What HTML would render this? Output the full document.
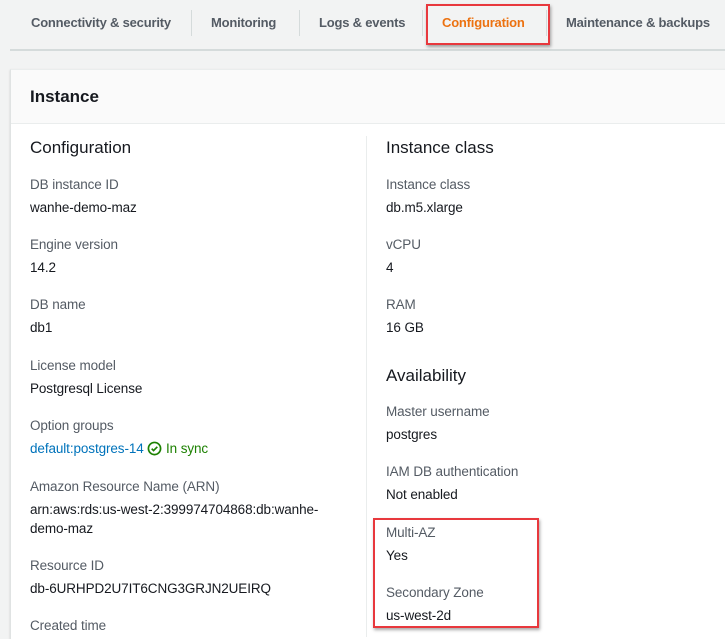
<!DOCTYPE html>
<html><head><meta charset="utf-8"><style>
*{margin:0;padding:0;box-sizing:border-box}
body{width:725px;height:637px;overflow:hidden;background:#f2f3f3;font-family:"Liberation Sans",sans-serif;position:relative;color:#16191f}
.a{position:absolute;white-space:nowrap}
.tab{top:15px;font-size:13px;letter-spacing:-0.2px;font-weight:bold;color:#545b64}
.sep{position:absolute;top:10px;width:1px;height:26px;background:#d5dbdb}
.lab{font-size:13.5px;color:#545b64;letter-spacing:-0.1px}
.val{font-size:13.5px;color:#16191f;letter-spacing:-0.1px}
.h{font-size:17px;color:#16191f}
.red{position:absolute;border:2px solid #e8383d;box-shadow:1px 2px 3px rgba(0,0,0,.35)}
</style></head><body>
<div class="a tab" style="left:31px">Connectivity &amp; security</div>
<div class="sep" style="left:191px"></div>
<div class="a tab" style="left:211px">Monitoring</div>
<div class="sep" style="left:299px"></div>
<div class="a tab" style="left:319px">Logs &amp; events</div>
<div class="sep" style="left:422px"></div>
<div class="a tab" style="left:442px;color:#ec7211">Configuration</div>
<div class="sep" style="left:546px"></div>
<div class="a tab" style="left:566px">Maintenance &amp; backups</div>
<div class="a" style="left:10px;top:49px;width:715px;height:2px;background:#d5dbdb"></div>
<div class="red" style="left:426px;top:4px;width:124px;height:41px"></div>

<div class="a" style="left:10px;top:69px;width:720px;height:570px;background:#fff;border-left:1px solid #e0e3e3;border-top:1px solid #eaeded;box-shadow:0 1px 2px rgba(0,0,0,.15)"></div>
<div class="a" style="left:11px;top:70px;width:714px;height:54px;background:#fafafa;border-bottom:1px solid #eaeded"></div>
<div class="a" style="left:30px;top:87px;font-size:17px;font-weight:bold">Instance</div>
<div class="a" style="left:366px;top:136px;width:1px;height:501px;background:#eaeded"></div>

<div class="a h" style="left:30px;top:138px">Configuration</div>
<div class="a lab" style="left:30px;top:177px">DB instance ID</div>
<div class="a val" style="left:30px;top:200px">wanhe-demo-maz</div>
<div class="a lab" style="left:30px;top:237px">Engine version</div>
<div class="a val" style="left:30px;top:260px">14.2</div>
<div class="a lab" style="left:30px;top:297px">DB name</div>
<div class="a val" style="left:30px;top:320px">db1</div>
<div class="a lab" style="left:30px;top:358px">License model</div>
<div class="a val" style="left:30px;top:381px">Postgresql License</div>
<div class="a lab" style="left:30px;top:418px">Option groups</div>
<div class="a val" style="left:30px;top:441px"><span style="color:#0073bb">default:postgres-14</span> <svg width="15" height="15" viewBox="0 0 16 16" style="vertical-align:-3px"><circle cx="8" cy="8" r="6.5" fill="none" stroke="#1d8102" stroke-width="1.8"/><path d="M5 8.2l2 2 4-4" fill="none" stroke="#1d8102" stroke-width="1.8"/></svg> <span style="color:#1d8102">In sync</span></div>
<div class="a lab" style="left:30px;top:479px">Amazon Resource Name (ARN)</div>
<div class="a val" style="left:30px;top:502px">arn:aws:rds:us-west-2:399974704868:db:wanhe-</div>
<div class="a val" style="left:30px;top:521px">demo-maz</div>
<div class="a lab" style="left:30px;top:558px">Resource ID</div>
<div class="a val" style="left:30px;top:581px">db-6URHPD2U7IT6CNG3GRJN2UEIRQ</div>
<div class="a lab" style="left:30px;top:618px">Created time</div>

<div class="a h" style="left:386px;top:138px">Instance class</div>
<div class="a lab" style="left:386px;top:177px">Instance class</div>
<div class="a val" style="left:386px;top:200px">db.m5.xlarge</div>
<div class="a lab" style="left:386px;top:237px">vCPU</div>
<div class="a val" style="left:386px;top:260px">4</div>
<div class="a lab" style="left:386px;top:297px">RAM</div>
<div class="a val" style="left:386px;top:320px">16 GB</div>
<div class="a h" style="left:386px;top:366px">Availability</div>
<div class="a lab" style="left:386px;top:404px">Master username</div>
<div class="a val" style="left:386px;top:427px">postgres</div>
<div class="a lab" style="left:386px;top:464px">IAM DB authentication</div>
<div class="a val" style="left:386px;top:487px">Not enabled</div>
<div class="a lab" style="left:386px;top:525px">Multi-AZ</div>
<div class="a val" style="left:386px;top:548px">Yes</div>
<div class="a lab" style="left:386px;top:585px">Secondary Zone</div>
<div class="a val" style="left:386px;top:608px">us-west-2d</div>
<div class="red" style="left:373px;top:518px;width:166px;height:110px"></div>
</body></html>
